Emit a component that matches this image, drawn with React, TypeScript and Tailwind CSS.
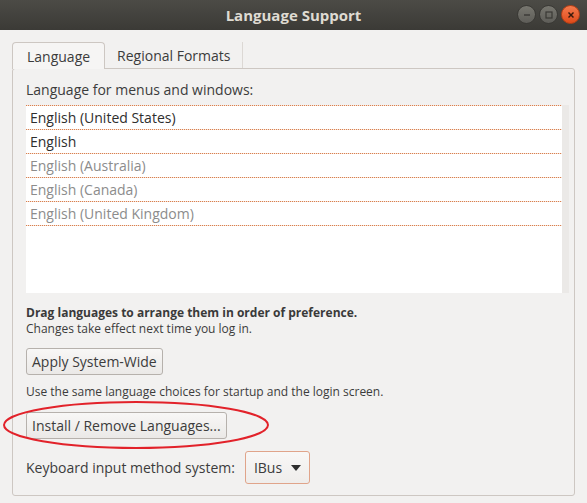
import React from "react";

const languages = [
  { name: "English (United States)", active: true },
  { name: "English", active: true },
  { name: "English (Australia)", active: false },
  { name: "English (Canada)", active: false },
  { name: "English (United Kingdom)", active: false },
];

const font = { fontFamily: '"Open Sans", "Noto Sans", sans-serif' };

const TitleButton: React.FC<{ kind: "min" | "max" | "close" }> = ({ kind }) => {
  const bg =
    kind === "close"
      ? "bg-gradient-to-b from-[#f47a4c] to-[#df4a17] border-[#b84016]"
      : "bg-gradient-to-b from-[#77766f] to-[#5e5d58] border-[#3a3935]";
  return (
    <div className={`w-[19px] h-[19px] rounded-full border flex items-center justify-center ${bg}`}>
      <svg width="10" height="10" viewBox="0 0 10 10">
        {kind === "min" && <line x1="2" y1="5" x2="8" y2="5" stroke="#3a3935" strokeWidth="1.4" />}
        {kind === "max" && <rect x="2" y="2" width="6" height="6" fill="none" stroke="#3a3935" strokeWidth="1.2" />}
        {kind === "close" && (
          <g stroke="#3b1a0c" strokeWidth="1.5">
            <line x1="2.5" y1="2.5" x2="7.5" y2="7.5" />
            <line x1="7.5" y1="2.5" x2="2.5" y2="7.5" />
          </g>
        )}
      </svg>
    </div>
  );
};

// dotted orange separator between rows
const Dots = () => (
  <div className="h-px bg-[linear-gradient(to_right,#d9804f_50%,#f6e2d6_50%)] bg-[length:2px_1px]" />
);

export default function App() {
  return (
    <div className="w-[587px] h-[503px] bg-[#f2f1f0] flex flex-col relative overflow-hidden text-[#3c3c3c]" style={font}>
      {/* title bar */}
      <div className="h-[30px] shrink-0 bg-gradient-to-b from-[#4c4b46] to-[#3b3a36] flex items-center relative">
        <div className="flex-1 text-center text-[15px] font-bold text-[#dfdbd2]">Language Support</div>
        <div className="absolute right-[7px] top-[5px] flex gap-[3px]">
          <TitleButton kind="min" />
          <TitleButton kind="max" />
          <TitleButton kind="close" />
        </div>
      </div>

      <div className="flex-1 px-[12px] pt-[12px] pb-[7px] flex flex-col">
        {/* tabs */}
        <div className="flex h-[26px] text-[14px]">
          <div className="px-[14px] border border-b-0 border-[#cdc7c2] rounded-t-[4px] bg-[#f6f5f4] flex items-center relative z-10 -mb-px">
            Language
          </div>
          <div className="px-[12px] flex items-center border-r border-[#dcd8d4]">Regional Formats</div>
        </div>

        {/* notebook panel */}
        <div className="flex-1 border border-[#cdc7c2] rounded-[3px] bg-[#f2f1f0] pl-[13px] pr-[5px] pt-[12px] flex flex-col">
          <div className="text-[14px] leading-[17px]">Language for menus and windows:</div>

          <div className="mt-[7px] h-[188px] flex">
            <div className="flex-1 bg-white">
              {languages.map((l) => (
                <div key={l.name}>
                  <Dots />
                  <div
                    className={`h-[23px] flex items-center pl-[4px] text-[14px] ${
                      l.active ? "text-[#2e2e2e]" : "text-[#8c8c8c]"
                    }`}
                  >
                    {l.name}
                  </div>
                </div>
              ))}
              <Dots />
            </div>
            <div className="w-[7px] bg-[#ebe9e7]" />
          </div>

          <div className="mt-[12px] text-[12px] leading-[16px] font-bold text-[#3a3a3a]">
            Drag languages to arrange them in order of preference.
          </div>
          <div className="text-[12px] leading-[16px]">Changes take effect next time you log in.</div>

          <div className="mt-[11px]">
            <button className="h-[27px] px-[5px] text-[14px] border border-[#b6b1ac] rounded-[3px] bg-gradient-to-b from-[#f8f7f6] to-[#ebe9e7]">
              Apply System-Wide
            </button>
          </div>
          <div className="mt-[9px] text-[12px] leading-[16px]">Use the same language choices for startup and the login screen.</div>

          <div className="mt-[12px]">
            <button className="h-[27px] px-[5px] text-[14px] border border-[#b6b1ac] rounded-[3px] bg-gradient-to-b from-[#f8f7f6] to-[#ebe9e7]">
              Install / Remove Languages...
            </button>
          </div>

          <div className="mt-[12px] flex items-center gap-[10px] text-[14px]">
            <span>Keyboard input method system:</span>
            <div className="h-[33px] px-[8px] flex items-center gap-[9px] border border-[#e0a48a] rounded-[3px] bg-gradient-to-b from-[#f8f7f6] to-[#efedeb]">
              <span>IBus</span>
              <svg width="10" height="6" viewBox="0 0 10 6">
                <path d="M0 0 L10 0 L5 6 Z" fill="#2e2e2e" />
              </svg>
            </div>
          </div>
        </div>
      </div>

      {/* red annotation ellipse */}
      <svg className="absolute left-0 top-[399px] pointer-events-none" width="280" height="52" viewBox="0 0 280 52">
        <ellipse cx="136" cy="26" rx="132" ry="23" fill="none" stroke="#e2222a" strokeWidth="2" />
      </svg>
    </div>
  );
}
